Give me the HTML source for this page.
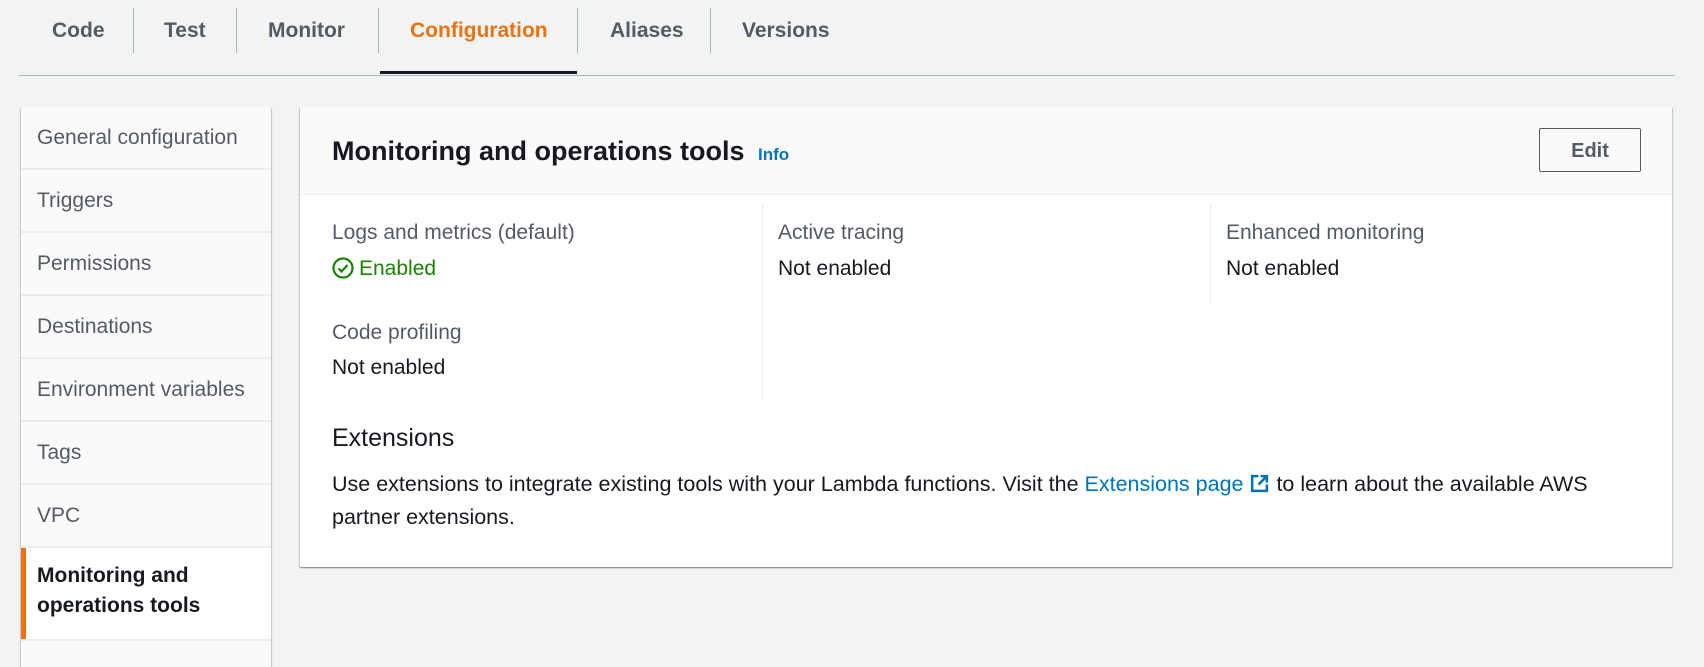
<!DOCTYPE html>
<html><head><meta charset="utf-8"><style>
*{box-sizing:border-box;margin:0;padding:0}
body{width:1704px;height:652px;overflow:hidden;background:#f2f3f3;font-family:"Liberation Sans",Arial,sans-serif;color:#16191f;position:relative}
.a{position:absolute;white-space:nowrap}
.tab{font-size:21px;font-weight:bold;color:#545b64;top:19px}
.sep{position:absolute;top:8px;width:1px;height:45px;background:#aab7b8}
.side{position:absolute;left:21px;top:107px;width:250px;height:560px;background:#fafafa;box-shadow:0 1px 1px rgba(0,28,36,.3),1px 1px 1px rgba(0,28,36,.15),-1px 1px 1px rgba(0,28,36,.15)}
.it{position:absolute;left:0;width:250px;height:63px;border-bottom:2px solid #eaeded;font-size:21px;line-height:24px;color:#545b64;padding:19px 0 0 16px}
.panel{position:absolute;left:300px;top:107px;width:1372px;height:460px;background:#fff;box-shadow:0 1px 1px rgba(0,28,36,.35),1px 1px 1px rgba(0,28,36,.15),-1px 1px 1px rgba(0,28,36,.15)}
.lbl{font-size:21px;line-height:24px;color:#545b64}
.val{font-size:21px;line-height:24px;color:#16191f}
</style></head><body>
<div class="a tab" style="left:52px">Code</div>
<div class="sep" style="left:133px"></div>
<div class="a tab" style="left:164px">Test</div>
<div class="sep" style="left:236px"></div>
<div class="a tab" style="left:268px">Monitor</div>
<div class="sep" style="left:378px"></div>
<div class="a tab" style="left:410px;color:#ec7211">Configuration</div>
<div class="sep" style="left:577px"></div>
<div class="a tab" style="left:610px">Aliases</div>
<div class="sep" style="left:710px"></div>
<div class="a tab" style="left:742px">Versions</div>
<div class="a" style="left:19px;top:75px;width:1656px;height:1px;background:#aab7b8"></div>
<div class="a" style="left:380px;top:71px;width:197px;height:3px;background:#16191f"></div>

<div class="side">
<div class="it" style="top:0">General configuration</div>
<div class="it" style="top:63px">Triggers</div>
<div class="it" style="top:126px">Permissions</div>
<div class="it" style="top:189px">Destinations</div>
<div class="it" style="top:252px">Environment variables</div>
<div class="it" style="top:315px">Tags</div>
<div class="it" style="top:378px">VPC</div>
<div class="it" style="top:441px;height:93px;background:#fff;color:#16191f;font-weight:bold;line-height:30px;padding-top:13px;white-space:normal">Monitoring and<br>operations tools</div>
<div style="position:absolute;left:0;top:441px;width:5px;height:91px;background:#ec7211"></div>
</div>

<div class="panel">
<div style="position:absolute;left:0;top:0;width:100%;height:88px;background:#fafafa;border-bottom:1px solid #eaeded"></div>
<div class="a" style="left:32px;top:27px;font-size:27px;line-height:34px;font-weight:bold">Monitoring and operations tools <span style="font-size:17px;color:#0073bb;margin-left:6px">Info</span></div>
<div class="a" style="left:1239px;top:21px;width:102px;height:44px;border:1px solid #545b64;border-radius:2px;font-size:20px;font-weight:bold;color:#545b64;text-align:center;line-height:44px">Edit</div>
<div class="a" style="left:462px;top:96px;width:1px;height:196px;background:#eaeded"></div>
<div class="a" style="left:910px;top:96px;width:1px;height:99px;background:#eaeded"></div>
<div class="a lbl" style="left:32px;top:114px">Logs and metrics (default)</div>
<div class="a val" style="left:32px;top:150px;color:#1d8102"><svg width="22" height="22" viewBox="0 0 22 22" style="vertical-align:-4px;margin-right:5px"><circle cx="11" cy="11" r="9.5" fill="none" stroke="#1d8102" stroke-width="2.2"/><path d="M6.5 11.5l3 3 6-6.5" fill="none" stroke="#1d8102" stroke-width="2.2"/></svg>Enabled</div>
<div class="a lbl" style="left:478px;top:114px">Active tracing</div>
<div class="a val" style="left:478px;top:150px">Not enabled</div>
<div class="a lbl" style="left:926px;top:114px">Enhanced monitoring</div>
<div class="a val" style="left:926px;top:150px">Not enabled</div>
<div class="a lbl" style="left:32px;top:214px">Code profiling</div>
<div class="a val" style="left:32px;top:249px">Not enabled</div>
<div class="a" style="left:32px;top:316px;font-size:25px;line-height:30px">Extensions</div>
<div class="a val" style="left:32px;top:361px;line-height:33px;font-size:21.5px">Use extensions to integrate existing tools with your Lambda functions. Visit the <span style="color:#0073bb">Extensions page</span> <svg width="21" height="21" viewBox="0 0 20 20" style="vertical-align:-3px"><path d="M9 3H3v14h14v-6" fill="none" stroke="#0073bb" stroke-width="2.4"/><path d="M11 3h6v6M17 3l-8 8" fill="none" stroke="#0073bb" stroke-width="2.4"/></svg> to learn about the available AWS<br>partner extensions.</div>
</div>
</body></html>
